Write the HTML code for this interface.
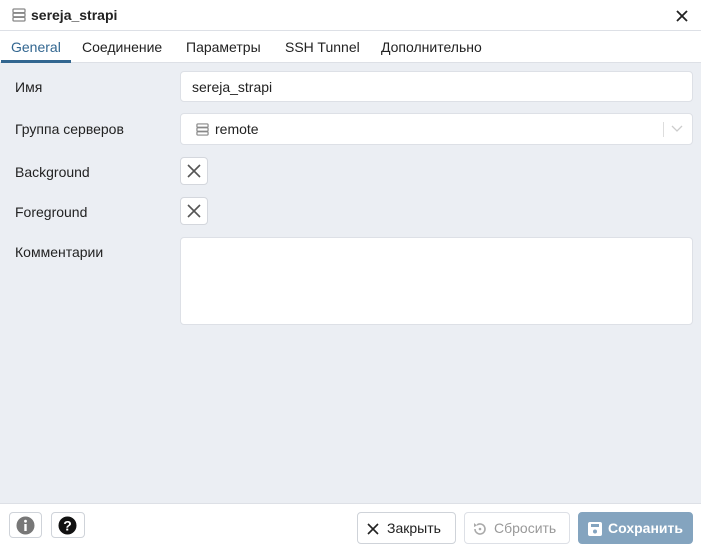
<!DOCTYPE html>
<html><head><meta charset="utf-8"><style>
*{box-sizing:border-box;margin:0;padding:0}
body{width:701px;height:549px;overflow:hidden;background:#fff;font-family:"Liberation Sans",Arial,sans-serif;font-size:14px;color:#222;position:relative}
.hdr{position:absolute;left:0;top:0;width:701px;height:31px;border-bottom:1px solid #dde0e6}
.tabs{position:absolute;left:0;top:31px;width:701px;height:32px;border-bottom:1px solid #dde0e6}
.tab{position:absolute;top:8px;font-size:14px;color:#222}
.body{position:absolute;left:0;top:63px;width:701px;height:440px;background:#ebeef3}
.lbl{position:absolute;left:15px;font-size:14px;color:#222}
.inp{position:absolute;left:180px;width:513px;background:#fff;border:1px solid #dde0e6;border-radius:4px}
.xb{position:absolute;left:180px;width:28px;height:28px;background:#fff;border:1px solid #d4d7dd;border-radius:4px}
.ftr{position:absolute;left:0;top:503px;width:701px;height:46px;border-top:1px solid #dde0e6;background:#fff}
.btn{position:absolute;top:8px;height:32px;border:1px solid #cfd3d9;border-radius:4px;background:#fff;font-size:14px}
</style></head><body>
<div class="hdr">
<svg style="position:absolute;left:12px;top:8px" width="14" height="14" viewBox="0 0 14 14"><g fill="none" stroke="#888" stroke-width="1.3"><rect x="1" y="1" width="12" height="3.6" rx="1"/><rect x="1" y="5.2" width="12" height="3.6" rx="1"/><rect x="1" y="9.4" width="12" height="3.6" rx="1"/></g></svg>
<div style="position:absolute;left:31px;top:7px;font-weight:bold;font-size:14px;color:#222">sereja_strapi</div>
<svg style="position:absolute;left:676px;top:10px" width="12" height="12" viewBox="0 0 12 12"><path d="M1 1L11 11M11 1L1 11" stroke="#222" stroke-width="1.8"/></svg>
</div>
<div class="tabs">
<div class="tab" style="left:11px;color:#326690">General</div>
<div style="position:absolute;left:1px;top:29px;width:70px;height:3px;background:#326690"></div>
<div class="tab" style="left:82px">Соединение</div>
<div class="tab" style="left:186px">Параметры</div>
<div class="tab" style="left:285px">SSH Tunnel</div>
<div class="tab" style="left:381px">Дополнительно</div>
</div>
<div class="body">
<div class="lbl" style="top:16px">Имя</div>
<div class="inp" style="top:8px;height:31px"><span style="position:absolute;left:11px;top:7px">sereja_strapi</span></div>
<div class="lbl" style="top:58px">Группа серверов</div>
<div class="inp" style="top:50px;height:32px">
<svg style="position:absolute;left:15px;top:9px" width="13" height="13" viewBox="0 0 14 14"><g fill="none" stroke="#888" stroke-width="1.3"><rect x="1" y="1" width="12" height="3.6" rx="1"/><rect x="1" y="5.2" width="12" height="3.6" rx="1"/><rect x="1" y="9.4" width="12" height="3.6" rx="1"/></g></svg>
<span style="position:absolute;left:34px;top:7px">remote</span>
<div style="position:absolute;left:482px;top:8px;width:1px;height:15px;background:#ddd"></div>
<svg style="position:absolute;left:490px;top:11px" width="12" height="8" viewBox="0 0 12 8"><path d="M1 1L6 6L11 1" fill="none" stroke="#ccc" stroke-width="1.3"/></svg>
</div>
<div class="lbl" style="top:101px">Background</div>
<div class="xb" style="top:94px"><svg style="position:absolute;left:6px;top:6px" width="14" height="14"><path d="M1 1L13 13M13 1L1 13" stroke="#555" stroke-width="1.6"/></svg></div>
<div class="lbl" style="top:141px">Foreground</div>
<div class="xb" style="top:134px"><svg style="position:absolute;left:6px;top:6px" width="14" height="14"><path d="M1 1L13 13M13 1L1 13" stroke="#555" stroke-width="1.6"/></svg></div>
<div class="lbl" style="top:181px">Комментарии</div>
<div class="inp" style="top:174px;height:88px"></div>
</div>
<div class="ftr">
<div class="btn" style="left:9px;width:33px;top:8px;height:26px"><svg style="position:absolute;left:6px;top:3px" width="19" height="19"><circle cx="9.5" cy="9.5" r="9" fill="#777"/><rect x="8.3" y="8" width="2.4" height="7" fill="#fff"/><circle cx="9.5" cy="5.2" r="1.4" fill="#fff"/></svg></div>
<div class="btn" style="left:51px;width:34px;top:8px;height:26px"><svg style="position:absolute;left:6px;top:3px" width="19" height="19"><circle cx="9.5" cy="9.5" r="9" fill="#111"/><text x="9.5" y="14.5" text-anchor="middle" font-family="Liberation Sans" font-weight="bold" font-size="14" fill="#fff">?</text></svg></div>
<div class="btn" style="left:357px;width:99px;color:#222"><svg style="position:absolute;left:9px;top:10px" width="12" height="12"><path d="M1 1L11 11M11 1L1 11" stroke="#222" stroke-width="1.6"/></svg><span style="position:absolute;left:29px;top:7px">Закрыть</span></div>
<div class="btn" style="left:464px;width:106px;color:#999;border-color:#dde0e6"><svg style="position:absolute;left:7px;top:8px" width="16" height="16" viewBox="0 0 16 16"><path d="M3 8A5 5 0 1 0 5 4" fill="none" stroke="#aaa" stroke-width="1.6"/><path d="M2 2L5 4.5L2 6" fill="#aaa"/><circle cx="8" cy="8" r="1.3" fill="#aaa"/></svg><span style="position:absolute;left:29px;top:7px">Сбросить</span></div>
<div class="btn" style="left:578px;width:115px;background:#84a4bf;border-color:#84a4bf;color:#fff;font-weight:bold"><svg style="position:absolute;left:9px;top:9px" width="14" height="14" viewBox="0 0 14 14"><rect x="0" y="0" width="14" height="14" rx="2" fill="#fff"/><rect x="3" y="2" width="8" height="3" fill="#84a4bf"/><circle cx="7" cy="9.5" r="2" fill="#84a4bf"/></svg><span style="position:absolute;left:29px;top:7px">Сохранить</span></div>
</div>
</body></html>
